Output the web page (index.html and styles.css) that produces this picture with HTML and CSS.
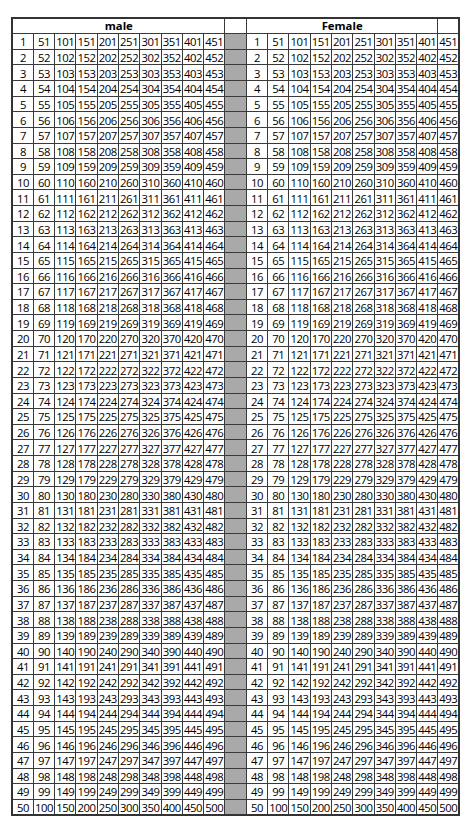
FILE: index.html
```html
<!DOCTYPE html>
<html>
<head>
<meta charset="utf-8">
<link rel="stylesheet" href="styles.css">
</head>
<body>
<table class="sheet">
<colgroup><col span="21" class="c"></colgroup>
<tr class="head"><th colspan="10">male</th><th></th><th colspan="9">Female</th><th></th></tr>
<tr><td>1<td>51<td>101<td>151<td>201<td>251<td>301<td>351<td>401<td>451<td class="gap"><td>1<td>51<td>101<td>151<td>201<td>251<td>301<td>351<td>401<td>451</tr>
<tr><td>2<td>52<td>102<td>152<td>202<td>252<td>302<td>352<td>402<td>452<td class="gap"><td>2<td>52<td>102<td>152<td>202<td>252<td>302<td>352<td>402<td>452</tr>
<tr><td>3<td>53<td>103<td>153<td>203<td>253<td>303<td>353<td>403<td>453<td class="gap"><td>3<td>53<td>103<td>153<td>203<td>253<td>303<td>353<td>403<td>453</tr>
<tr><td>4<td>54<td>104<td>154<td>204<td>254<td>304<td>354<td>404<td>454<td class="gap"><td>4<td>54<td>104<td>154<td>204<td>254<td>304<td>354<td>404<td>454</tr>
<tr><td>5<td>55<td>105<td>155<td>205<td>255<td>305<td>355<td>405<td>455<td class="gap"><td>5<td>55<td>105<td>155<td>205<td>255<td>305<td>355<td>405<td>455</tr>
<tr><td>6<td>56<td>106<td>156<td>206<td>256<td>306<td>356<td>406<td>456<td class="gap"><td>6<td>56<td>106<td>156<td>206<td>256<td>306<td>356<td>406<td>456</tr>
<tr><td>7<td>57<td>107<td>157<td>207<td>257<td>307<td>357<td>407<td>457<td class="gap"><td>7<td>57<td>107<td>157<td>207<td>257<td>307<td>357<td>407<td>457</tr>
<tr><td>8<td>58<td>108<td>158<td>208<td>258<td>308<td>358<td>408<td>458<td class="gap"><td>8<td>58<td>108<td>158<td>208<td>258<td>308<td>358<td>408<td>458</tr>
<tr><td>9<td>59<td>109<td>159<td>209<td>259<td>309<td>359<td>409<td>459<td class="gap"><td>9<td>59<td>109<td>159<td>209<td>259<td>309<td>359<td>409<td>459</tr>
<tr><td>10<td>60<td>110<td>160<td>210<td>260<td>310<td>360<td>410<td>460<td class="gap"><td>10<td>60<td>110<td>160<td>210<td>260<td>310<td>360<td>410<td>460</tr>
<tr><td>11<td>61<td>111<td>161<td>211<td>261<td>311<td>361<td>411<td>461<td class="gap"><td>11<td>61<td>111<td>161<td>211<td>261<td>311<td>361<td>411<td>461</tr>
<tr><td>12<td>62<td>112<td>162<td>212<td>262<td>312<td>362<td>412<td>462<td class="gap"><td>12<td>62<td>112<td>162<td>212<td>262<td>312<td>362<td>412<td>462</tr>
<tr><td>13<td>63<td>113<td>163<td>213<td>263<td>313<td>363<td>413<td>463<td class="gap"><td>13<td>63<td>113<td>163<td>213<td>263<td>313<td>363<td>413<td>463</tr>
<tr><td>14<td>64<td>114<td>164<td>214<td>264<td>314<td>364<td>414<td>464<td class="gap"><td>14<td>64<td>114<td>164<td>214<td>264<td>314<td>364<td>414<td>464</tr>
<tr><td>15<td>65<td>115<td>165<td>215<td>265<td>315<td>365<td>415<td>465<td class="gap"><td>15<td>65<td>115<td>165<td>215<td>265<td>315<td>365<td>415<td>465</tr>
<tr><td>16<td>66<td>116<td>166<td>216<td>266<td>316<td>366<td>416<td>466<td class="gap"><td>16<td>66<td>116<td>166<td>216<td>266<td>316<td>366<td>416<td>466</tr>
<tr><td>17<td>67<td>117<td>167<td>217<td>267<td>317<td>367<td>417<td>467<td class="gap"><td>17<td>67<td>117<td>167<td>217<td>267<td>317<td>367<td>417<td>467</tr>
<tr><td>18<td>68<td>118<td>168<td>218<td>268<td>318<td>368<td>418<td>468<td class="gap"><td>18<td>68<td>118<td>168<td>218<td>268<td>318<td>368<td>418<td>468</tr>
<tr><td>19<td>69<td>119<td>169<td>219<td>269<td>319<td>369<td>419<td>469<td class="gap"><td>19<td>69<td>119<td>169<td>219<td>269<td>319<td>369<td>419<td>469</tr>
<tr><td>20<td>70<td>120<td>170<td>220<td>270<td>320<td>370<td>420<td>470<td class="gap"><td>20<td>70<td>120<td>170<td>220<td>270<td>320<td>370<td>420<td>470</tr>
<tr><td>21<td>71<td>121<td>171<td>221<td>271<td>321<td>371<td>421<td>471<td class="gap"><td>21<td>71<td>121<td>171<td>221<td>271<td>321<td>371<td>421<td>471</tr>
<tr><td>22<td>72<td>122<td>172<td>222<td>272<td>322<td>372<td>422<td>472<td class="gap"><td>22<td>72<td>122<td>172<td>222<td>272<td>322<td>372<td>422<td>472</tr>
<tr><td>23<td>73<td>123<td>173<td>223<td>273<td>323<td>373<td>423<td>473<td class="gap"><td>23<td>73<td>123<td>173<td>223<td>273<td>323<td>373<td>423<td>473</tr>
<tr><td>24<td>74<td>124<td>174<td>224<td>274<td>324<td>374<td>424<td>474<td class="gap"><td>24<td>74<td>124<td>174<td>224<td>274<td>324<td>374<td>424<td>474</tr>
<tr><td>25<td>75<td>125<td>175<td>225<td>275<td>325<td>375<td>425<td>475<td class="gap"><td>25<td>75<td>125<td>175<td>225<td>275<td>325<td>375<td>425<td>475</tr>
<tr><td>26<td>76<td>126<td>176<td>226<td>276<td>326<td>376<td>426<td>476<td class="gap"><td>26<td>76<td>126<td>176<td>226<td>276<td>326<td>376<td>426<td>476</tr>
<tr><td>27<td>77<td>127<td>177<td>227<td>277<td>327<td>377<td>427<td>477<td class="gap"><td>27<td>77<td>127<td>177<td>227<td>277<td>327<td>377<td>427<td>477</tr>
<tr><td>28<td>78<td>128<td>178<td>228<td>278<td>328<td>378<td>428<td>478<td class="gap"><td>28<td>78<td>128<td>178<td>228<td>278<td>328<td>378<td>428<td>478</tr>
<tr><td>29<td>79<td>129<td>179<td>229<td>279<td>329<td>379<td>429<td>479<td class="gap"><td>29<td>79<td>129<td>179<td>229<td>279<td>329<td>379<td>429<td>479</tr>
<tr><td>30<td>80<td>130<td>180<td>230<td>280<td>330<td>380<td>430<td>480<td class="gap"><td>30<td>80<td>130<td>180<td>230<td>280<td>330<td>380<td>430<td>480</tr>
<tr><td>31<td>81<td>131<td>181<td>231<td>281<td>331<td>381<td>431<td>481<td class="gap"><td>31<td>81<td>131<td>181<td>231<td>281<td>331<td>381<td>431<td>481</tr>
<tr><td>32<td>82<td>132<td>182<td>232<td>282<td>332<td>382<td>432<td>482<td class="gap"><td>32<td>82<td>132<td>182<td>232<td>282<td>332<td>382<td>432<td>482</tr>
<tr><td>33<td>83<td>133<td>183<td>233<td>283<td>333<td>383<td>433<td>483<td class="gap"><td>33<td>83<td>133<td>183<td>233<td>283<td>333<td>383<td>433<td>483</tr>
<tr><td>34<td>84<td>134<td>184<td>234<td>284<td>334<td>384<td>434<td>484<td class="gap"><td>34<td>84<td>134<td>184<td>234<td>284<td>334<td>384<td>434<td>484</tr>
<tr><td>35<td>85<td>135<td>185<td>235<td>285<td>335<td>385<td>435<td>485<td class="gap"><td>35<td>85<td>135<td>185<td>235<td>285<td>335<td>385<td>435<td>485</tr>
<tr><td>36<td>86<td>136<td>186<td>236<td>286<td>336<td>386<td>436<td>486<td class="gap"><td>36<td>86<td>136<td>186<td>236<td>286<td>336<td>386<td>436<td>486</tr>
<tr><td>37<td>87<td>137<td>187<td>237<td>287<td>337<td>387<td>437<td>487<td class="gap"><td>37<td>87<td>137<td>187<td>237<td>287<td>337<td>387<td>437<td>487</tr>
<tr><td>38<td>88<td>138<td>188<td>238<td>288<td>338<td>388<td>438<td>488<td class="gap"><td>38<td>88<td>138<td>188<td>238<td>288<td>338<td>388<td>438<td>488</tr>
<tr><td>39<td>89<td>139<td>189<td>239<td>289<td>339<td>389<td>439<td>489<td class="gap"><td>39<td>89<td>139<td>189<td>239<td>289<td>339<td>389<td>439<td>489</tr>
<tr><td>40<td>90<td>140<td>190<td>240<td>290<td>340<td>390<td>440<td>490<td class="gap"><td>40<td>90<td>140<td>190<td>240<td>290<td>340<td>390<td>440<td>490</tr>
<tr><td>41<td>91<td>141<td>191<td>241<td>291<td>341<td>391<td>441<td>491<td class="gap"><td>41<td>91<td>141<td>191<td>241<td>291<td>341<td>391<td>441<td>491</tr>
<tr><td>42<td>92<td>142<td>192<td>242<td>292<td>342<td>392<td>442<td>492<td class="gap"><td>42<td>92<td>142<td>192<td>242<td>292<td>342<td>392<td>442<td>492</tr>
<tr><td>43<td>93<td>143<td>193<td>243<td>293<td>343<td>393<td>443<td>493<td class="gap"><td>43<td>93<td>143<td>193<td>243<td>293<td>343<td>393<td>443<td>493</tr>
<tr><td>44<td>94<td>144<td>194<td>244<td>294<td>344<td>394<td>444<td>494<td class="gap"><td>44<td>94<td>144<td>194<td>244<td>294<td>344<td>394<td>444<td>494</tr>
<tr><td>45<td>95<td>145<td>195<td>245<td>295<td>345<td>395<td>445<td>495<td class="gap"><td>45<td>95<td>145<td>195<td>245<td>295<td>345<td>395<td>445<td>495</tr>
<tr><td>46<td>96<td>146<td>196<td>246<td>296<td>346<td>396<td>446<td>496<td class="gap"><td>46<td>96<td>146<td>196<td>246<td>296<td>346<td>396<td>446<td>496</tr>
<tr><td>47<td>97<td>147<td>197<td>247<td>297<td>347<td>397<td>447<td>497<td class="gap"><td>47<td>97<td>147<td>197<td>247<td>297<td>347<td>397<td>447<td>497</tr>
<tr><td>48<td>98<td>148<td>198<td>248<td>298<td>348<td>398<td>448<td>498<td class="gap"><td>48<td>98<td>148<td>198<td>248<td>298<td>348<td>398<td>448<td>498</tr>
<tr><td>49<td>99<td>149<td>199<td>249<td>299<td>349<td>399<td>449<td>499<td class="gap"><td>49<td>99<td>149<td>199<td>249<td>299<td>349<td>399<td>449<td>499</tr>
<tr><td>50<td>100<td>150<td>200<td>250<td>300<td>350<td>400<td>450<td>500<td class="gap"><td>50<td>100<td>150<td>200<td>250<td>300<td>350<td>400<td>450<td>500</tr>
</table>
</body>
</html>
```
FILE: styles.css
```css
html, body {
  margin: 0;
  padding: 0;
  background: #ffffff;
}

.sheet {
  margin: 17px 0 0 11px;
  width: 448px;
  border-collapse: collapse;
  table-layout: fixed;
  border: 2px solid #333333;
  font-family: "Open Sans", "Liberation Sans", sans-serif;
  font-size: 11.3px;
  color: #000000;
}

.sheet .c {
  width: 21.3px;
}

.sheet tr {
  height: 15.64px;
}

.sheet td,
.sheet th {
  border: 1px solid #3a3a3a;
  padding: 0;
  line-height: 12px;
  vertical-align: middle;
  text-align: center;
  white-space: nowrap;
  overflow: hidden;
  letter-spacing: -0.45px;
}

.sheet td {
  padding-top: 2px;
}

.sheet th {
  font-weight: 700;
  letter-spacing: 0;
}

.sheet .gap {
  background: #a9a9a9;
}
```
